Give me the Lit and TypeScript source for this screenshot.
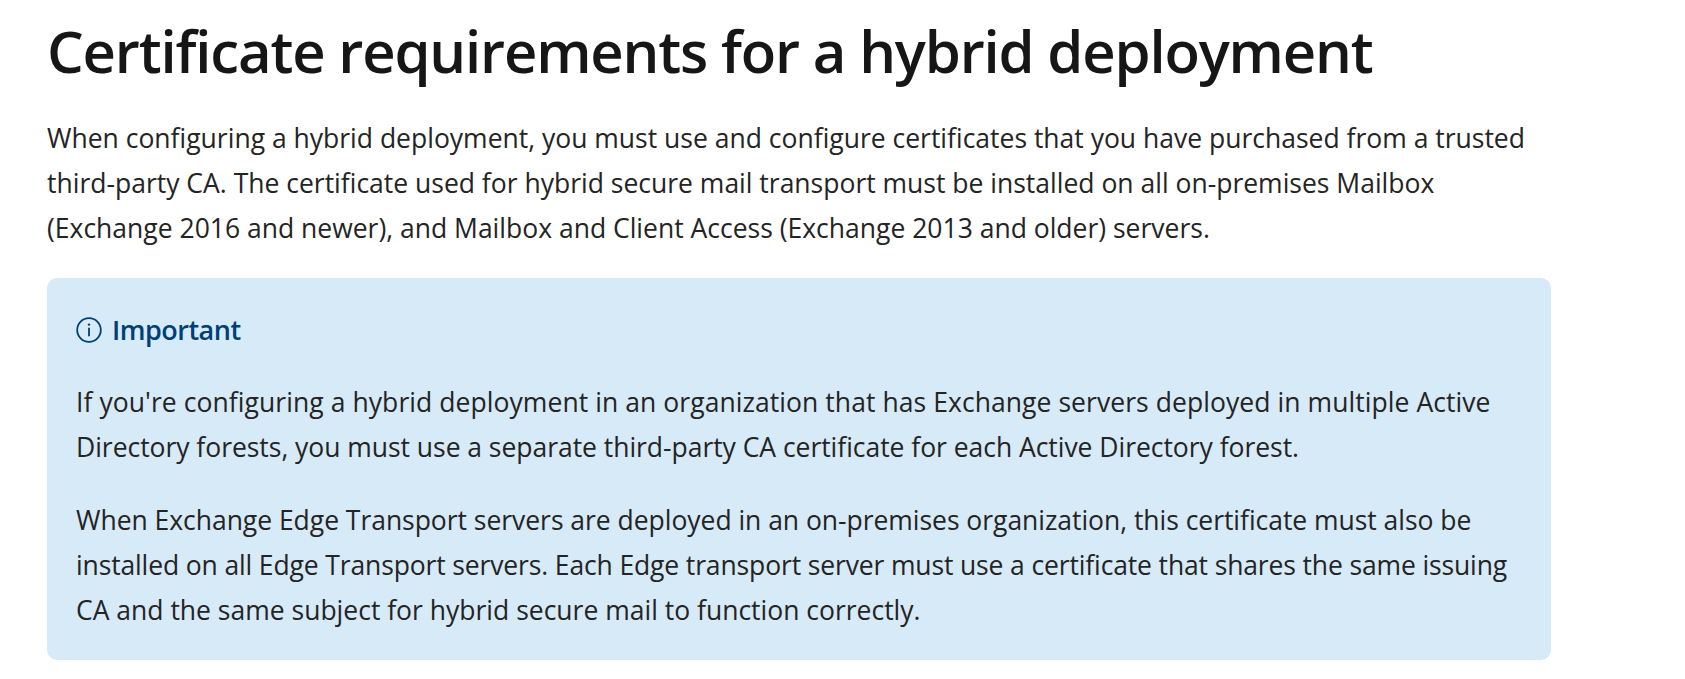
import { LitElement, html, css } from "lit";
import { customElement } from "lit/decorators.js";

@customElement("app-root")
export class AppRoot extends LitElement {
  static styles = css`
    :host { display: block; background: #fff; height: 679px; overflow: hidden; font-family: "Open Sans", "Noto Sans", sans-serif; color: #242424; }
    .page { width: 1504px; padding: 12px 0 0 47px; }
    h1 { margin: 0; font-size: 58px; line-height: 78px; font-weight: 600; letter-spacing: -1.17px; color: #161616; white-space: nowrap; }
    p { margin: 0; font-size: 26.5px; line-height: 45px; white-space: nowrap; }
    .lead { margin-top: 26px; }
    .alert { margin-top: 27px; background: #d7eaf8; border-radius: 10px; padding: 34px 29px 27px; }
    .title { display: flex; align-items: center; gap: 10px; font-size: 27px; line-height: 36px; font-weight: 600; letter-spacing: -0.5px; color: #004173; }
    .alert p { margin-top: 28px; }
    .alert .title + p { margin-top: 32px; }
    .wider { letter-spacing: 0.066px; }
    .tighter { letter-spacing: -0.135px; }
    .snug { letter-spacing: -0.035px; }
    svg { width: 26px; height: 26px; display: block; flex: none; }
  `;
  render() {
    return html`<div class="page">
      <h1>Certificate requirements for a hybrid deployment</h1>
      <p class="lead">When configuring a hybrid deployment, you must use and configure certificates that you have purchased from a trusted<br>third-party CA. The certificate used for hybrid secure mail transport must be installed on all on-premises Mailbox<br>(Exchange 2016 and newer), and Mailbox and Client Access (Exchange 2013 and older) servers.</p>
      <div class="alert">
        <div class="title"><svg viewBox="0 0 26 26" fill="none" stroke="#004173" stroke-width="1.8"><circle cx="13" cy="13" r="11.8"/><path d="M13 10.8v8.4"/><circle cx="13" cy="7.6" r="1.2" fill="#004173" stroke="none"/></svg>Important</div>
        <p><span class="wider">If you're configuring a hybrid deployment in an organization that has Exchange servers deployed in multiple Active</span><br><span class="snug">Directory forests, you must use a separate third-party CA certificate for each Active Directory forest.</span></p>
        <p><span class="snug">When Exchange Edge Transport servers are deployed in an on-premises organization, this certificate must also be</span><br><span class="tighter">installed on all Edge Transport servers. Each Edge transport server must use a certificate that shares the same issuing</span><br>CA and the same subject for hybrid secure mail to function correctly.</p>
      </div>
    </div>`;
  }
}
